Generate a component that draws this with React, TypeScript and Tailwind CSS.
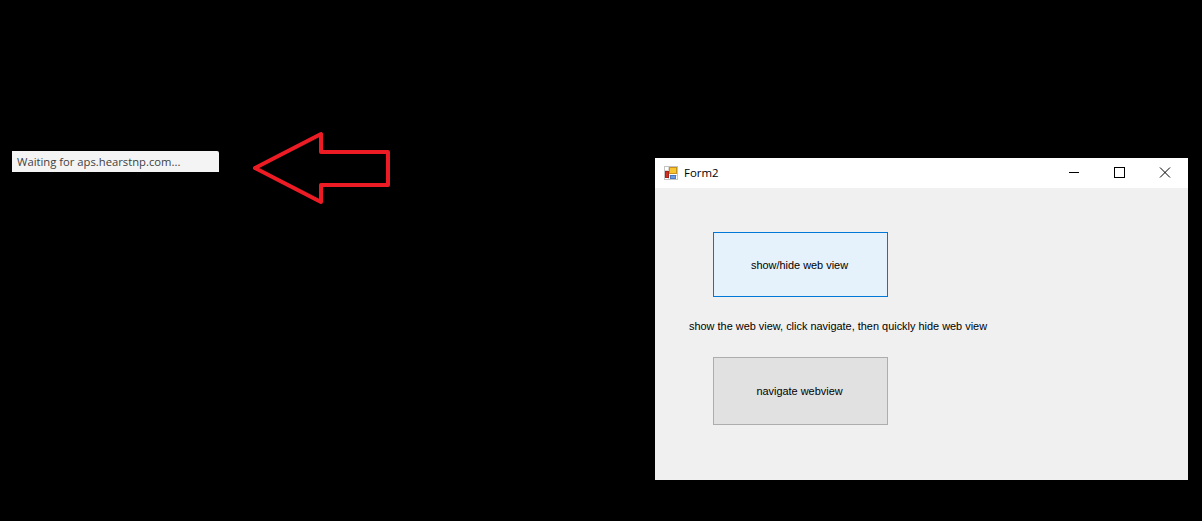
export default function App() {
  return (
    <div className="w-[1202px] h-[521px] bg-black flex items-start overflow-hidden font-['Liberation_Sans',sans-serif]">
      {/* loading tooltip */}
      <div className="mt-[151px] ml-[12px] w-[207px] h-[21px] bg-[#f4f4f4] rounded-tr-[2px] pl-[5px] pt-[1px] flex items-center text-[11.25px] text-[#3f3f3f] font-['Open_Sans',sans-serif] whitespace-nowrap">
        Waiting for aps.hearstnp.com...
      </div>

      {/* red arrow */}
      <svg className="mt-[131px] ml-[33px] shrink-0" width="138" height="74" viewBox="0 0 138 74" fill="none">
        <path d="M3 37L69 3V21H136V54H69V71Z" stroke="#ed1c24" strokeWidth="4" strokeLinejoin="round" />
      </svg>

      {/* Form2 window */}
      <div className="mt-[158px] ml-[265px] w-[533px] h-[322px] shrink-0 bg-[#f0f0f0] flex flex-col">
        <div className="h-[30px] bg-white flex items-center pl-[9px]">
          <svg width="14" height="14" viewBox="0 0 14 14" className="shrink-0">
            <rect x="0.5" y="0.5" width="13" height="13" fill="#fff" stroke="#c4c4c4" />
            <path d="M4.5 1V13M1 4.5H4.5M5 9.5H13" stroke="#d8d8d8" />
            <rect x="1.5" y="5.5" width="3" height="6" fill="#d0301f" stroke="#a32417" />
            <rect x="5.5" y="1.5" width="7" height="6" fill="#f7c52f" stroke="#c8921a" />
            <rect x="6.5" y="9.5" width="5" height="3" fill="#6b9ae0" stroke="#4a76bd" />
          </svg>
          <span className="ml-[6px] text-[11.4px] text-black font-['Open_Sans',sans-serif]">Form2</span>
          <div className="ml-auto flex items-center h-full">
            <svg width="46" height="30" viewBox="0 0 46 30" fill="none" stroke="#000">
              <path d="M19 14.5H29" />
            </svg>
            <svg width="46" height="30" viewBox="0 0 46 30" fill="none" stroke="#000">
              <rect x="18.5" y="9.5" width="10" height="10" />
            </svg>
            <svg width="46" height="30" viewBox="0 0 46 30" fill="none" stroke="#000">
              <path d="M18 9.5L28 19.5M28 9.5L18 19.5" />
            </svg>
          </div>
        </div>

        <div className="flex flex-col items-start text-[10.93px] text-black">
          <button className="mt-[44px] ml-[58px] w-[175px] h-[65px] bg-[#e5f1fb] border border-[#0078d7] pr-[2px] pt-[1px]">
            show/hide web view
          </button>
          <p className="mt-[23px] ml-[34px] h-[13px] leading-[13px] whitespace-nowrap">
            show the web view, click navigate, then quickly hide web view
          </p>
          <button className="mt-[24px] ml-[58px] w-[175px] h-[68px] bg-[#e1e1e1] border border-[#adadad] pr-[2px]">
            navigate webview
          </button>
        </div>
      </div>
    </div>
  );
}
